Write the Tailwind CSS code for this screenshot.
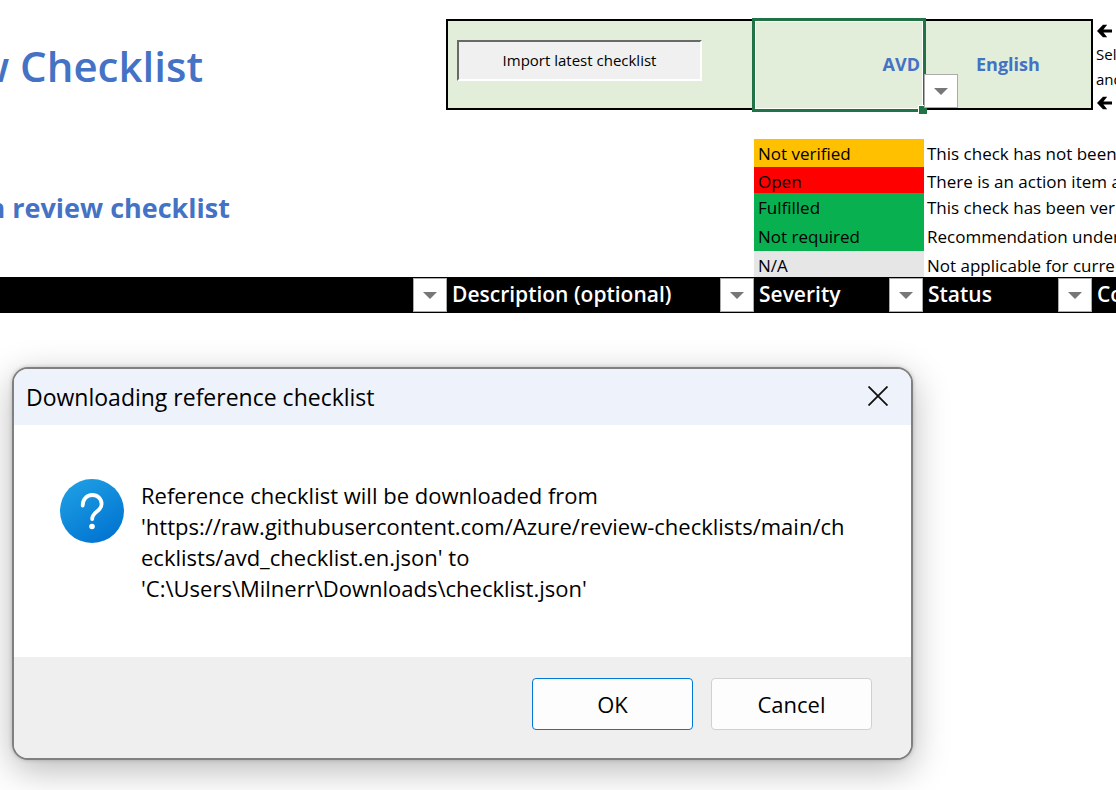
<!DOCTYPE html>
<html lang="en">
<head>
<meta charset="utf-8">
<title>Review Checklist</title>
<script src="https://cdn.jsdelivr.net/npm/@tailwindcss/browser@4"></script>
</head>
<body class="bg-white font-['Open_Sans','Noto_Sans',sans-serif] text-black">
<div class="relative min-h-screen overflow-hidden pt-[19px]">

  <!-- Title and selectors -->
  <header class="grid h-[91px] grid-cols-[446px_647px_1fr] whitespace-nowrap">
    <h1 class="flex w-[203px] justify-end overflow-hidden text-[42px] leading-[93px] font-semibold text-[#4472c4]">w Checklist</h1>
    <div class="relative grid grid-cols-[306px_170px_1fr] border-2 border-black bg-[#e2eeda] text-lg font-bold text-[#4472c4]">
      <div class="pt-[19px] pl-[9px]">
        <button class="h-[41px] w-[245px] border-2 border-t-[#696969] border-r-white border-b-white border-l-[#696969] bg-[#f0f0f0] pt-px text-[15px] font-normal text-black">Import latest checklist</button>
      </div>
      <div class="flex items-center justify-end pr-1 pb-0.5">AVD</div>
      <div class="flex items-center pb-0.5 pl-[52px]">English</div>
      <div class="absolute -top-[3px] left-[304px] h-[94px] w-[174px] border-3 border-[#217346] inset-ring inset-ring-white"></div>
      <span class="absolute top-[84px] left-[470px] size-[9px] border-t border-l border-white bg-[#217346]"></span>
      <button aria-label="Choose checklist" class="absolute top-[53px] left-[476px] flex size-[34px] items-center justify-center border border-[#ababab] bg-white">
        <svg width="14" height="7" viewBox="0 0 14 7" fill="#777"><path d="M0 0h14L7 7z"/></svg>
      </button>
    </div>
    <div class="overflow-hidden pt-px pl-[3px] text-[15px] leading-[25px]">
      <svg class="mt-1 mb-1 ml-px" width="15" height="14" viewBox="0 0 15 14" fill="#000"><path d="M0 7L6 .8h4.200L6.400 5.500H15v3H6.400l3.800 4.700H6z"/></svg>
      <p>Sel</p>
      <p>and</p>
      <svg class="mt-1 ml-px" width="15" height="14" viewBox="0 0 15 14" fill="#000"><path d="M0 7L6 .8h4.200L6.400 5.500H15v3H6.400l3.800 4.700H6z"/></svg>
    </div>
  </header>

  <!-- Subtitle and status legend -->
  <section class="mt-[29px] grid grid-cols-[754px_1fr] whitespace-nowrap">
    <h2 class="flex w-[230px] justify-end overflow-hidden text-[27px] leading-[138px] font-bold text-[#4472c4]">n review checklist</h2>
    <dl class="grid grid-cols-[170px_1fr] grid-rows-[28px_26px_29px_29px_26px] overflow-hidden text-[17px] leading-[29px]">
      <dt class="bg-[#ffc000] pl-1">Not verified</dt><dd class="pl-[3px]">This check has not been</dd>
      <dt class="bg-[#ff0000] pl-1">Open</dt><dd class="pl-[3px]">There is an action item a</dd>
      <dt class="bg-[#08b050] pl-1">Fulfilled</dt><dd class="pl-[3px]">This check has been veri</dd>
      <dt class="bg-[#08b050] pl-1">Not required</dt><dd class="pl-[3px]">Recommendation under</dd>
      <dt class="bg-[#e6e6e6] pl-1">N/A</dt><dd class="pl-[3px]">Not applicable for curren</dd>
    </dl>
  </section>

  <!-- Table header -->
  <table class="w-full table-fixed border-collapse bg-black text-left text-[21px] leading-8 whitespace-nowrap text-white">
    <colgroup><col class="w-[447px]"><col class="w-[307px]"><col class="w-[169px]"><col class="w-[169px]"><col></colgroup>
    <thead>
      <tr class="h-9">
        <th class="p-0"><button aria-label="Filter" class="ml-auto flex size-[34px] items-center justify-center border border-[#ababab] bg-white"><svg width="14" height="7" viewBox="0 0 14 7" fill="#777"><path d="M0 0h14L7 7z"/></svg></button></th>
        <th class="p-0 pl-[5px] font-semibold"><div class="flex justify-between">Description (optional)<button aria-label="Filter description" class="flex size-[34px] items-center justify-center border border-[#ababab] bg-white"><svg width="14" height="7" viewBox="0 0 14 7" fill="#777"><path d="M0 0h14L7 7z"/></svg></button></div></th>
        <th class="p-0 pl-[5px] font-semibold"><div class="flex justify-between">Severity<button aria-label="Filter severity" class="flex size-[34px] items-center justify-center border border-[#ababab] bg-white"><svg width="14" height="7" viewBox="0 0 14 7" fill="#777"><path d="M0 0h14L7 7z"/></svg></button></div></th>
        <th class="p-0 pl-[5px] font-semibold"><div class="flex justify-between">Status<button aria-label="Filter status" class="flex size-[34px] items-center justify-center border border-[#ababab] bg-white"><svg width="14" height="7" viewBox="0 0 14 7" fill="#777"><path d="M0 0h14L7 7z"/></svg></button></div></th>
        <th class="overflow-hidden p-0 pb-0.5 pl-[5px] font-semibold">Co</th>
      </tr>
    </thead>
  </table>

  <!-- Message box -->
  <div role="dialog" aria-labelledby="dialog-title" class="absolute top-[367px] left-3 flex w-[901px] flex-col overflow-hidden rounded-[16px] border-2 border-[#808080] bg-white shadow-[0_10px_36px_rgba(0,0,0,0.28),0_0_4px_rgba(0,0,0,0.2)]">
    <div class="flex h-14 items-center justify-between bg-[#eef3fb] pr-[23px] pl-3">
      <h3 id="dialog-title" class="text-[23px]">Downloading reference checklist</h3>
      <button aria-label="Close" class="pb-0.5"><svg width="20" height="20" viewBox="0 0 20 20" fill="none" stroke="#111" stroke-width="1.800"><path d="M.5.5l19 19M19.500.5l-19 19"/></svg></button>
    </div>
    <div class="flex h-[232px] gap-[17px] pt-[54px] pl-[46px]">
      <svg width="64" height="64" viewBox="0 0 64 64">
        <defs><linearGradient id="disc" x1="0.200" y1="0" x2="0.800" y2="1"><stop offset="0" stop-color="#1e9fe4"/><stop offset="1" stop-color="#0072d0"/></linearGradient></defs>
        <circle cx="32" cy="32" r="32" fill="url(#disc)"/>
        <path d="M22.700 26.500c0-6 4-10.500 9.600-10.500 5.500 0 9.300 3.900 9.300 9 0 7.500-9.400 7.500-9.400 15" fill="none" stroke="#fff" stroke-width="3.800" stroke-linecap="round"/>
        <circle cx="32" cy="47.500" r="2.800" fill="#fff"/>
      </svg>
      <p class="pt-px text-[22px] leading-[31px] whitespace-nowrap">Reference checklist will be downloaded from<br>'https://raw.githubusercontent.com/Azure/review-checklists/main/ch<br>ecklists/avd_checklist.en.json' to<br>'C:\Users\Milnerr\Downloads\checklist.json'</p>
    </div>
    <div class="flex h-[101px] justify-end gap-[18px] bg-[#efefef] pt-[21px] pr-[39px] text-[22px]">
      <button class="h-[52px] w-[161px] rounded border border-[#0078d4] bg-[#fdfdfd]">OK</button>
      <button class="h-[52px] w-[161px] rounded border border-[#d0d0d0] bg-[#fdfdfd]">Cancel</button>
    </div>
  </div>
</div>
</body>
</html>
